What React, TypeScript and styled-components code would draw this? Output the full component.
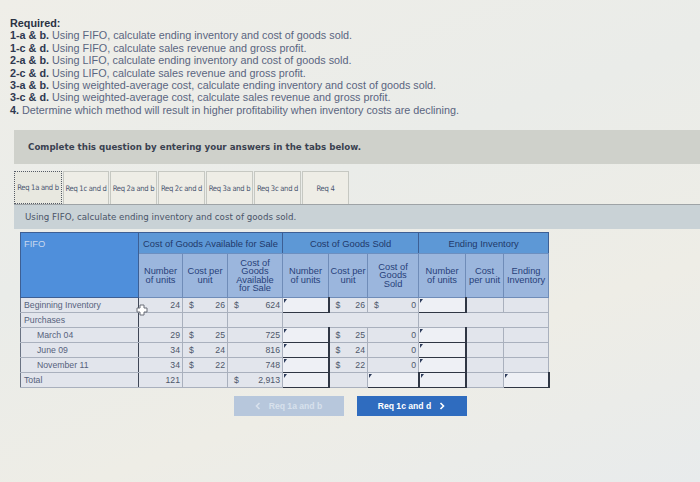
import React from "react";
import styled, { createGlobalStyle } from "styled-components";

const Global = createGlobalStyle`
  html, body { margin: 0; padding: 0; }
  body {
    width: 700px;
    height: 482px;
    overflow: hidden;
    background: linear-gradient(160deg, #efeee8 0%, #eaece9 40%, #eeede6 70%, #e8ebec 100%);
    font-family: "Liberation Sans", Arial, sans-serif;
  }
`;

const Page = styled.div`
  display: flex;
  flex-direction: column;
  padding-top: 17px;
`;

const Required = styled.div`
  padding-left: 10px;
  font-size: 10.8px;
  line-height: 12.4px;
  color: #5a6580;
  white-space: nowrap;
`;

const ReqTitle = styled.div`
  font-weight: bold;
  color: #2a3142;
`;

const ReqLabel = styled.b`
  color: #2f3850;
`;

const Main = styled.div`
  margin-top: 14px;
  margin-left: 14px;
  display: flex;
  flex-direction: column;
`;

const Banner = styled.div`
  height: 34px;
  background: #cfd1cb;
  display: flex;
  align-items: center;
  padding-left: 14px;
  font-family: "DejaVu Sans", Verdana, sans-serif;
  font-weight: bold;
  font-size: 8.7px;
  color: #3a4150;
`;

const TabBar = styled.div`
  margin-top: 7px;
  display: flex;
  border-bottom: 1px solid #9ea3a6;
`;

const Tab = styled.div<{ $active?: boolean; $w: number }>`
  width: ${(p) => p.$w}px;
  height: 33px;
  box-sizing: border-box;
  display: flex;
  align-items: center;
  justify-content: center;
  font-family: "DejaVu Sans Condensed", "DejaVu Sans", Verdana, sans-serif;
  font-stretch: condensed;
  font-size: 7.6px;
  letter-spacing: -0.3px;
  color: #4a5670;
  background: ${(p) => (p.$active ? "#e8e8e0" : "#eeede6")};
  border: ${(p) => (p.$active ? "1px dotted #555b66" : "1px solid #c6c8c2")};
  border-bottom: ${(p) => (p.$active ? "1px dotted #555b66" : "none")};
  margin-right: 1px;
  white-space: nowrap;
`;

const Instruction = styled.div`
  height: 24px;
  background: #c9d2d6;
  display: flex;
  align-items: center;
  padding-left: 11px;
  font-family: "DejaVu Sans", Verdana, sans-serif;
  font-size: 8.7px;
  color: #4a5468;
`;

const TableWrap = styled.div`
  position: relative;
  margin-top: 3px;
  margin-left: 6px;
  width: 528px;
`;

const Table = styled.table`
  border-collapse: collapse;
  table-layout: fixed;
  width: 528px;
  font-family: "Liberation Sans", Arial, sans-serif;
  font-size: 8.7px;
`;

const H1 = styled.th<{ $fifo?: boolean }>`
  height: 20px;
  padding: 0 0 0 ${(p) => (p.$fifo ? "3px" : "0")};
  background: ${(p) => (p.$fifo ? "#4f8fdb" : "#5d98d6")};
  color: ${(p) => (p.$fifo ? "#c9d8ee" : "#22386a")};
  font-weight: normal;
  font-size: 9.4px;
  text-align: ${(p) => (p.$fifo ? "left" : "center")};
  vertical-align: ${(p) => (p.$fifo ? "top" : "middle")};
  padding-top: ${(p) => (p.$fifo ? "5px" : "0")};
  border: 1px solid #3d5f94;
  border-bottom: ${(p) => (p.$fifo ? "1px solid #3d5f94" : "1px solid #6c8fc0")};
`;

const H2 = styled.th`
  height: 43px;
  padding: 0 1px;
  background: #9bb6dd;
  color: #28417a;
  font-weight: normal;
  font-size: 9.3px;
  text-align: center;
  line-height: 8.6px;
  border: 1px solid #6f8cb8;
  border-top: none;
`;

const H2Section = styled(H2)`
  border-left: 1px solid #3d5f94;
`;

const Td = styled.td<{ $indent?: boolean; $sectionLeft?: boolean }>`
  height: 14px;
  padding: 0 ${(p) => (p.$indent ? "0" : "2px")} 0 ${(p) => (p.$indent ? "16px" : "3px")};
  background: #e2e5ec;
  color: #4d576a;
  border: 1px solid #a9b0bd;
  border-left: ${(p) => (p.$sectionLeft ? "1px solid #3f4656" : "1px solid #a9b0bd")};
  white-space: nowrap;
  text-align: right;
`;

const LabelTd = styled(Td)`
  text-align: left;
  color: #56627c;
  border-left: 1px solid #6a7384;
  border-right: 1px solid #3f4656;
`;

const InputTd = styled.td`
  position: relative;
  height: 14px;
  padding: 0;
  background: #eef0f5;
  border: 1px solid #2f3644;
  border-width: 1px 2px 1px 1px;
  &::before {
    content: "";
    position: absolute;
    left: 1px;
    top: 1px;
    border-top: 4px solid #2d3b5a;
    border-right: 3px solid transparent;
  }
`;

const Money = styled.div`
  display: flex;
  justify-content: space-between;
  padding-left: 3px;
`;

const ButtonRow = styled.div`
  display: flex;
  justify-content: center;
  gap: 13px;
  margin-top: 8px;
`;

const NavButton = styled.div<{ $disabled?: boolean }>`
  width: 110px;
  height: 20px;
  display: flex;
  align-items: center;
  justify-content: center;
  gap: 8px;
  font-family: "Liberation Sans", Arial, sans-serif;
  font-weight: bold;
  font-size: 8.6px;
  background: ${(p) => (p.$disabled ? "#b7c7dc" : "#2f6cbf")};
  color: ${(p) => (p.$disabled ? "#d8e1ec" : "#ffffff")};
`;

const Cursor = styled.svg`
  position: absolute;
  left: 116px;
  top: 72px;
`;

const Chevron = ({ dir }: { dir: "l" | "r" }) => (
  <svg width="6" height="8" viewBox="0 0 6 8">
    <path
      d={dir === "r" ? "M1.5 1 L4.5 4 L1.5 7" : "M4.5 1 L1.5 4 L4.5 7"}
      fill="none"
      stroke="currentColor"
      strokeWidth="1.6"
    />
  </svg>
);

const reqs: [string, string][] = [
  ["1-a & b.", "Using FIFO, calculate ending inventory and cost of goods sold."],
  ["1-c & d.", "Using FIFO, calculate sales revenue and gross profit."],
  ["2-a & b.", "Using LIFO, calculate ending inventory and cost of goods sold."],
  ["2-c & d.", "Using LIFO, calculate sales revenue and gross profit."],
  ["3-a & b.", "Using weighted-average cost, calculate ending inventory and cost of goods sold."],
  ["3-c & d.", "Using weighted-average cost, calculate sales revenue and gross profit."],
  ["4.", "Determine which method will result in higher profitability when inventory costs are declining."],
];

const tabs: [string, number][] = [
  ["Req 1a and b", 48],
  ["Req 1c and d", 46],
  ["Req 2a and b", 47],
  ["Req 2c and d", 47],
  ["Req 3a and b", 47],
  ["Req 3c and d", 47],
  ["Req 4", 47],
];

const colWidths = [118, 44, 45, 55, 46, 39, 51, 47, 38, 45];

const purchases = [
  { label: "March 04", units: "29", cost: "25", total: "725" },
  { label: "June 09", units: "34", cost: "24", total: "816" },
  { label: "November 11", units: "34", cost: "22", total: "748" },
];

export default function App() {
  return (
    <>
      <Global />
      <Page>
        <Required>
          <ReqTitle>Required:</ReqTitle>
          {reqs.map(([l, t]) => (
            <div key={l}>
              <ReqLabel>{l}</ReqLabel> {t}
            </div>
          ))}
        </Required>
        <Main>
          <Banner>Complete this question by entering your answers in the tabs below.</Banner>
          <TabBar>
            {tabs.map(([t, w], i) => (
              <Tab key={t} $w={w} $active={i === 0}>
                {t}
              </Tab>
            ))}
          </TabBar>
          <Instruction>Using FIFO, calculate ending inventory and cost of goods sold.</Instruction>
          <TableWrap>
            <Table>
              <colgroup>
                {colWidths.map((w, i) => (
                  <col key={i} style={{ width: w }} />
                ))}
              </colgroup>
              <thead>
                <tr>
                  <H1 $fifo rowSpan={2}>FIFO</H1>
                  <H1 colSpan={3}>Cost of Goods Available for Sale</H1>
                  <H1 colSpan={3}>Cost of Goods Sold</H1>
                  <H1 colSpan={3}>Ending Inventory</H1>
                </tr>
                <tr>
                  <H2Section>Number<br />of units</H2Section>
                  <H2>Cost per<br />unit</H2>
                  <H2>Cost of<br />Goods<br />Available<br />for Sale</H2>
                  <H2Section>Number<br />of units</H2Section>
                  <H2>Cost per<br />unit</H2>
                  <H2>Cost of<br />Goods<br />Sold</H2>
                  <H2Section>Number<br />of units</H2Section>
                  <H2>Cost<br />per unit</H2>
                  <H2>Ending<br />Inventory</H2>
                </tr>
              </thead>
              <tbody>
                <tr>
                  <LabelTd>Beginning Inventory</LabelTd>
                  <Td>24</Td>
                  <Td><Money><span>$</span><span>26</span></Money></Td>
                  <Td><Money><span>$</span><span>624</span></Money></Td>
                  <InputTd />
                  <Td><Money><span>$</span><span>26</span></Money></Td>
                  <Td><Money><span>$</span><span>0</span></Money></Td>
                  <InputTd />
                  <Td />
                  <Td />
                </tr>
                <tr>
                  <LabelTd>Purchases</LabelTd>
                  <Td />
                  <Td />
                  <Td />
                  <Td colSpan={3} $sectionLeft />
                  <Td colSpan={3} $sectionLeft />
                </tr>
                {purchases.map((p) => (
                  <tr key={p.label}>
                    <LabelTd $indent>{p.label}</LabelTd>
                    <Td>{p.units}</Td>
                    <Td><Money><span>$</span><span>{p.cost}</span></Money></Td>
                    <Td>{p.total}</Td>
                    <InputTd />
                    <Td><Money><span>$</span><span>{p.cost}</span></Money></Td>
                    <Td>0</Td>
                    <InputTd />
                    <Td />
                    <Td />
                  </tr>
                ))}
                <tr>
                  <LabelTd>Total</LabelTd>
                  <Td>121</Td>
                  <Td />
                  <Td><Money><span>$</span><span>2,913</span></Money></Td>
                  <InputTd />
                  <Td />
                  <InputTd />
                  <InputTd />
                  <Td />
                  <InputTd />
                </tr>
              </tbody>
            </Table>
            <Cursor width="12" height="12" viewBox="0 0 12 12">
              <path
                d="M4 1 H8 V4 H11 V8 H8 V11 H4 V8 H1 V4 H4 Z"
                fill="#ffffff"
                stroke="#6b6f78"
                strokeWidth="1"
              />
            </Cursor>
          </TableWrap>
        </Main>
        <ButtonRow>
          <NavButton $disabled>
            <Chevron dir="l" />
            <span>Req 1a and b</span>
          </NavButton>
          <NavButton>
            <span>Req 1c and d</span>
            <Chevron dir="r" />
          </NavButton>
        </ButtonRow>
      </Page>
    </>
  );
}
